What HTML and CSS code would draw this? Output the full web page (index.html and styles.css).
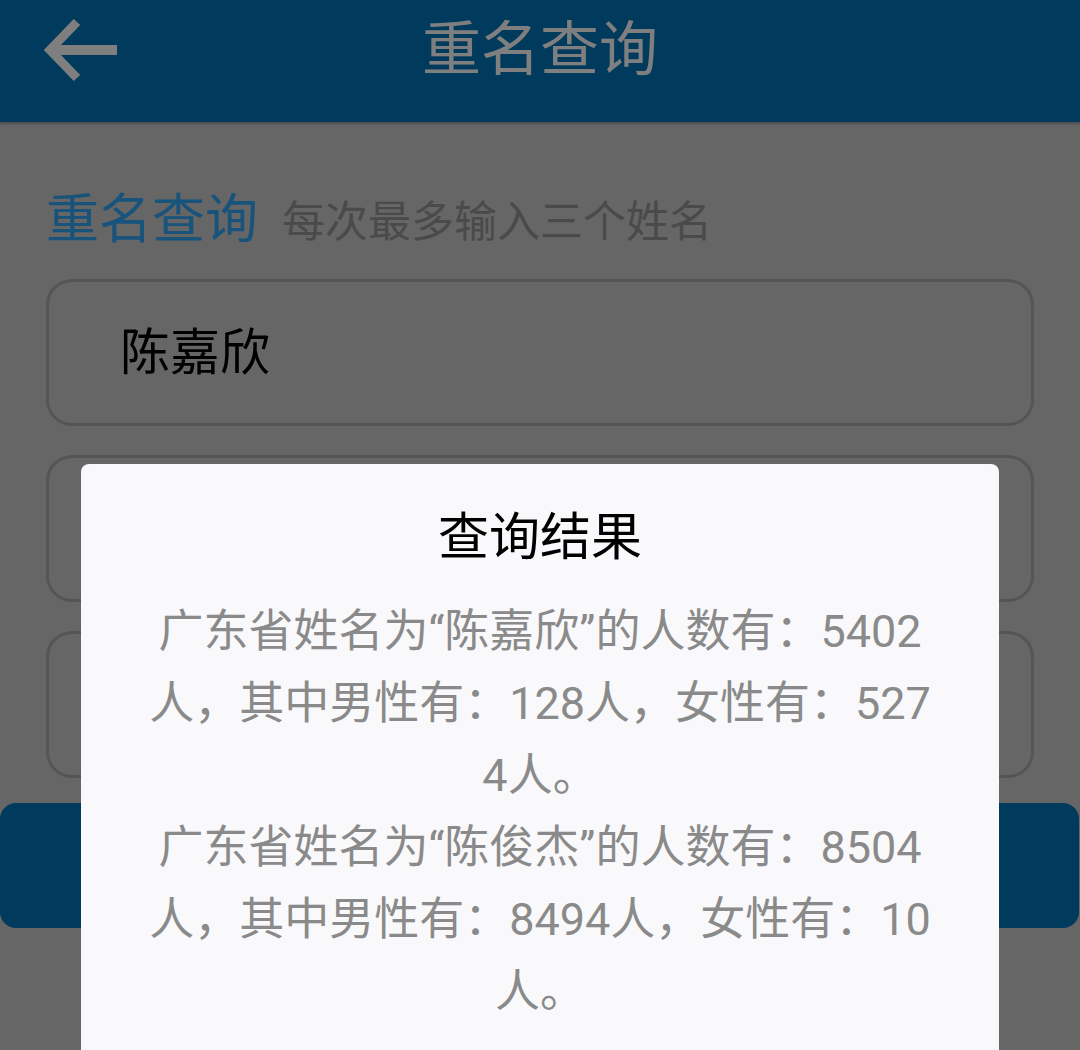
FILE: index.html
```html
<!DOCTYPE html>
<html lang="zh-CN">
<head>
  <meta charset="UTF-8" />
  <meta name="viewport" content="width=device-width, initial-scale=1.0" />
  <title>重名查询</title>
  <link rel="stylesheet" href="styles.css">
</head>
<body>
  <!-- Toolbar -->
  <header class="toolbar">
    <a class="back" href="">
      <svg width="80" height="70" viewBox="0 0 80 70">
        <polyline points="37,7 10,35 37,63" fill="none" stroke="#fff" stroke-width="9" />
        <line x1="10" y1="35" x2="77" y2="35" stroke="#fff" stroke-width="10" />
      </svg>
    </a>
    <div class="toolbar-title">重名查询</div>
    <div></div>
  </header>

  <div class="content">
    <div class="section-title">
      <span class="section-name">重名查询</span>
      <span class="section-hint">每次最多输入三个姓名</span>
    </div>

    <input type="text" class="name-input" value="陈嘉欣">
    <input type="text" class="name-input" value="">
    <input type="text" class="name-input" value="">
  </div>

  <!-- Button liegt unter dem Dialog -->
  <button class="query-button" aria-label="查询"></button>

  <!-- Ergebnis-Dialog -->
  <div class="overlay">
    <div class="dialog">
      <div class="dialog-title">查询结果</div>
      <div class="dialog-text">
        <p>广东省姓名为“陈嘉欣”的人数有：5402人，其中男性有：128人，女性有：5274人。</p>
        <p>广东省姓名为“陈俊杰”的人数有：8504人，其中男性有：8494人，女性有：10人。</p>
      </div>
    </div>
  </div>
</body>
</html>
```

FILE: styles.css
```css
html, body {
  margin: 0;
  width: 1080px;
  height: 1050px;
  overflow: hidden;
  background-color: #cccccc;
  font-family: Roboto, 'Noto Sans CJK SC', sans-serif;
}

.toolbar {
  height: 122px;
  box-sizing: border-box;
  padding-bottom: 22px;
  background-color: #0074b8;
  display: grid;
  grid-template-columns: 1fr auto 1fr;
  align-items: center;
  box-shadow: 0 2px 2px rgba(0, 0, 0, 0.25);
}

.back {
  display: flex;
  padding-left: 40px;
}

.toolbar-title {
  color: white;
  font-size: 59px;
  line-height: 70px;
}

.content {
  padding: 58px 46px 0 46px;
}

.section-title {
  display: flex;
  align-items: center;
  gap: 24px;
  height: 70px;
  margin-bottom: 29px;
}

.section-name {
  color: #2fa6f5;
  font-size: 53px;
}

.section-hint {
  color: #959595;
  font-size: 43px;
  padding-top: 6px;
}

/* Eingabefelder */
.name-input {
  display: block;
  width: 100%;
  height: 147px;
  box-sizing: border-box;
  margin: 0 0 29px 0;
  padding: 0 0 10px 71px;
  border: 3px solid #aaaaaa;
  border-radius: 26px;
  background: transparent;
  font-family: inherit;
  font-size: 50px;
  color: black;
  outline: none;
}

.query-button {
  display: block;
  width: 1079px;
  height: 125px;
  margin-top: -4px;
  border: none;
  border-radius: 16px;
  background-color: #0074b8;
}

/* Dialog */
.overlay {
  position: fixed;
  top: 0;
  left: 0;
  right: 0;
  bottom: 0;
  background-color: rgba(0, 0, 0, 0.5);
  display: flex;
  justify-content: center;
  align-items: flex-start;
  padding-top: 464px;
}

.dialog {
  width: 918px;
  background-color: #f9f9fb;
  border-radius: 8px;
  padding: 39px 62px 80px 62px;
  box-sizing: border-box;
  text-align: center;
}

.dialog-title {
  color: black;
  font-size: 51px;
  line-height: 70px;
  margin-bottom: 23px;
}

.dialog-text p {
  margin: 0;
  color: #8a8a8a;
  font-size: 45px;
  line-height: 72px;
  word-break: break-all;
}
```
